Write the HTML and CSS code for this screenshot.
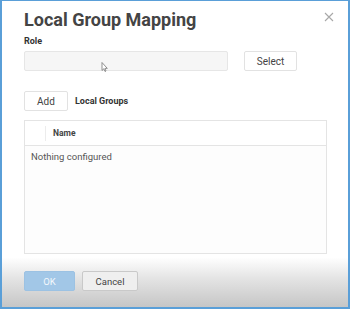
FILE: index.html
```html
<!DOCTYPE html>
<html>
<head>
<meta charset="utf-8">
<link rel="stylesheet" href="styles.css">
</head>
<body>
<div class="frame">
  <div class="content">
    <h1 class="title">Local Group Mapping</h1>
    <svg class="close" width="10" height="10" viewBox="0 0 10 10"><path d="M1 1L9 9M9 1L1 9" stroke="#a8a8a8" stroke-width="1.1" fill="none"/></svg>
    <div class="label">Role</div>
    <div class="role-row">
      <div class="input">
        <svg class="cursor" width="7" height="10" viewBox="0 0 7 10"><path d="M1 0.5V8.5L2.8 6.8L4 9.5L5 9L3.9 6.4H6.3Z" fill="#fff" stroke="#777" stroke-width="0.8"/></svg>
      </div>
      <button class="btn select">Select</button>
    </div>
    <div class="add-row">
      <button class="btn add">Add</button>
      <span class="label inline">Local Groups</span>
    </div>
    <div class="table">
      <div class="thead">
        <div class="sep"></div>
        <div class="th">Name</div>
      </div>
      <div class="tbody">Nothing configured</div>
    </div>
  </div>
  <div class="footer">
    <button class="btn ok">OK</button>
    <button class="btn cancel">Cancel</button>
  </div>
</div>
</body>
</html>
```
FILE: styles.css
```css
html, body { margin: 0; padding: 0; background: #fff; }
body { font-family: Roboto, "Liberation Sans", sans-serif; color: #444; }
.frame {
  width: 350px; height: 309px; box-sizing: border-box;
  border: 2px solid #5a9fd8; border-top-width: 1px;
  background: #fff; display: flex; flex-direction: column; position: relative;
}
.content { flex: 1; padding: 0 22px; }
.title {
  margin: 8px 0 0; height: 22px; line-height: 22px;
  font-size: 18px; font-weight: 700; color: #444;
}
.close { position: absolute; top: 11px; right: 14px; }
.label { margin-top: 4px; line-height: 12px; font-size: 9px; font-weight: 700; color: #333; }
.label.inline { margin: 0 0 0 7px; }
.role-row { margin-top: 4px; display: flex; align-items: center; }
.input {
  width: 204px; height: 20px; box-sizing: border-box; position: relative;
  border: 1px solid #e6e6e6; border-radius: 2px; background: #f6f6f6;
}
.cursor { position: absolute; left: 76px; top: 10px; }
.btn {
  font-family: Roboto, "Liberation Sans", sans-serif; font-size: 9.5px; color: #444;
  height: 20px; box-sizing: border-box; padding: 0;
  border: 1px solid #e2e2e2; border-radius: 2px; background: #fff;
}
.select { margin-left: 16px; width: 53px; font-size: 10px; }
.add-row { margin-top: 20px; display: flex; align-items: center; }
.add { width: 44px; font-size: 10px; }
.table {
  margin-top: 9px; width: 303px; height: 134px; box-sizing: border-box;
  border: 1px solid #e4e4e4; display: flex; flex-direction: column;
}
.thead {
  height: 25px; box-sizing: border-box; border-bottom: 1px solid #e4e4e4;
  display: flex; align-items: center;
}
.sep { width: 1px; height: 15px; background: #ececec; margin-left: 20px; }
.th { margin-left: 7px; font-size: 8.5px; font-weight: 700; color: #444; }
.tbody { flex: 1; padding: 5px 6px; font-size: 9.5px; line-height: 12px; color: #555; background: #fdfdfd; }
.footer {
  height: 49px; box-sizing: border-box; padding: 13px 22px 0;
  display: flex; align-items: flex-start; gap: 7px;
  background: linear-gradient(#fefefe 0%, #e2e2e2 45%, #c6c6c6 100%);
}
.ok { width: 51px; background: #a2c7e7; border-color: #9cc2e3; color: #f4f8fc; }
.cancel { width: 56px; background: #efefef; border-color: #c9c9c9; }
```
